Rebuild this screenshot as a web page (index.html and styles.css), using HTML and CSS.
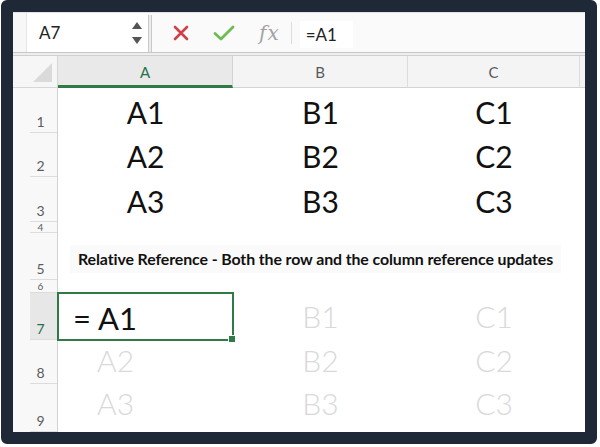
FILE: index.html
```html
<!DOCTYPE html>
<html>
<head>
<meta charset="utf-8">
<link rel="stylesheet" href="styles.css">
</head>
<body>
<div class="frame">
  <div class="sheet">
    <div class="fbar">
      <div class="pad"></div>
      <div class="namebox">
        <span class="ref">A7</span>
        <svg class="stepper" width="12" height="24" viewBox="0 0 12 24">
          <path d="M6 1 L11 8 L1 8 Z" fill="#555"/>
          <path d="M1 16 L11 16 L6 23 Z" fill="#555"/>
        </svg>
      </div>
      <div class="vsep"></div>
      <svg class="ico-x" width="16" height="16" viewBox="0 0 16 16">
        <path d="M2 2 L14 14 M14 2 L2 14" stroke="#cf4148" stroke-width="2.6" stroke-linecap="round"/>
      </svg>
      <svg class="ico-ok" width="22" height="16" viewBox="0 0 22 16">
        <path d="M2 8.5 L8 14 L20 2" stroke="#6cbd4e" stroke-width="2.8" fill="none" stroke-linecap="round" stroke-linejoin="round"/>
      </svg>
      <span class="fx">fx</span>
      <div class="fdiv"></div>
      <div class="formula">=A1</div>
    </div>
    <div class="fbar-bottom"></div>
    <div class="grid">
      <div class="corner"><span class="tri"></span></div>
      <div class="ch active">A</div>
      <div class="ch">B</div>
      <div class="ch">C</div>
      <div class="ch end"></div>

      <div class="rh"><span>1</span></div>
      <div class="c">A1</div><div class="c">B1</div><div class="c">C1</div><div class="c"></div>

      <div class="rh"><span>2</span></div>
      <div class="c">A2</div><div class="c">B2</div><div class="c">C2</div><div class="c"></div>

      <div class="rh"><span>3</span></div>
      <div class="c">A3</div><div class="c">B3</div><div class="c">C3</div><div class="c"></div>

      <div class="rh small"><span>4</span></div>
      <div class="c wide"></div><div class="c"></div>

      <div class="rh"><span>5</span></div>
      <div class="c wide note"><span class="note-box">Relative Reference - Both the row and the column reference updates</span></div><div class="c"></div>

      <div class="rh small"><span>6</span></div>
      <div class="c wide"></div><div class="c"></div>

      <div class="rh sel"><span>7</span></div>
      <div class="c selected"><span class="eq">=</span>A1</div><div class="c ghost r7">B1</div><div class="c ghost r7">C1</div><div class="c"></div>

      <div class="rh"><span>8</span></div>
      <div class="c ghost left r8">A2</div><div class="c ghost r8">B2</div><div class="c ghost r8">C2</div><div class="c"></div>

      <div class="rh"><span>9</span></div>
      <div class="c ghost left r9">A3</div><div class="c ghost r9">B3</div><div class="c ghost r9">C3</div><div class="c"></div>
    </div>
  </div>
</div>
</body>
</html>
```

FILE: styles.css
```css
* { box-sizing: border-box; }
html, body { margin: 0; padding: 0; background: #ffffff; }
body { width: 600px; height: 447px; overflow: hidden; font-family: Lato, "Open Sans", sans-serif; }

.frame {
  margin: 0 0 0 1px;
  width: 596px;
  height: 444px;
  border: 12px solid #1f2836;
  border-radius: 6px;
  background: #fff;
}
.sheet {
  width: 572px;
  height: 420px;
  display: flex;
  flex-direction: column;
  overflow: hidden;
}

/* formula bar */
.fbar {
  height: 40px;
  display: flex;
  align-items: center;
  background: #fafafa;
  border-top: 1px solid #e2e2e2;
}
.pad { width: 14px; align-self: stretch; background: #f7f7f7; border-right: 1px solid #e4e4e4; }
.namebox {
  width: 121px;
  align-self: stretch;
  background: #ffffff;
  display: flex;
  align-items: center;
  padding-left: 12px;
}
.ref { font-size: 17px; color: #222; flex: 1; }
.stepper { margin-right: 5px; }
.vsep { width: 4px; align-self: stretch; border-left: 1px solid #c9c9c9; border-right: 1px solid #c9c9c9; background: #ececec; margin-top: 2px; }
.ico-x { margin-left: 21px; }
.ico-ok { margin-left: 24px; }
.fx {
  margin-left: 24px;
  font-family: "DejaVu Serif", "Liberation Serif", serif;
  font-style: italic;
  font-size: 20px;
  color: #a3a3a3;
  letter-spacing: 1px;
}
.fdiv { width: 1px; height: 22px; background: #dcdcdc; margin-left: 11px; }
.formula {
  margin-left: 8px;
  align-self: stretch;
  margin-top: 8px;
  margin-bottom: 4px;
  width: 53px;
  background: #fff;
  font-size: 17px;
  color: #222;
  display: flex;
  align-items: center;
  padding-left: 6px;
}
.fbar-bottom {
  height: 4px;
  border-top: 1px solid #c6c6c6;
  border-bottom: 1px solid #cfcfcf;
  background: #eeeeee;
}

/* grid */
.grid {
  flex: 1;
  display: grid;
  grid-template-columns: 45px 175px 175px 172px 1fr;
  grid-template-rows: 32px 45px 44px 45px 11px 47px 13px 47px 44px 48px;
  overflow: hidden;
}
.corner {
  background: #f6f6f6;
  border-bottom: 1px solid #d6d6d6;
  border-right: 1px solid #d6d6d6;
  position: relative;
}
.tri {
  position: absolute;
  right: 5px;
  bottom: 5px;
  width: 0; height: 0;
  border-left: 19px solid transparent;
  border-bottom: 19px solid #dadada;
}
.ch {
  background: #f4f4f4;
  border-bottom: 1px solid #d3d3d3;
  border-right: 1px solid #dcdcdc;
  display: flex;
  align-items: center;
  justify-content: center;
  font-size: 15px;
  color: #5a5a5a;
  padding-top: 1px;
}
.ch.active {
  background: #e9e9e9;
  color: #217346;
  border-bottom: 3px solid #2f7a46;
  border-right: 1px solid #d3d3d3;
  padding-top: 2px;
}
.ch.end { border-right: none; }

.rh {
  background: #f8f8f8;
  padding-left: 17px;
  border-right: 1px solid #d3d3d3;
  overflow: hidden;
}
.rh span {
  display: flex;
  height: 100%;
  align-items: flex-end;
  justify-content: center;
  padding-right: 6px;
  padding-bottom: 3px;
  border-bottom: 1px solid #dcdcdc;
  font-size: 14px;
  line-height: 14px;
  color: #5c5c5c;
}
.rh.small span { padding-bottom: 0; font-size: 10px; line-height: 10px; align-items: center; }
.rh.sel { background: #f8f8f8; }
.rh.sel span { background: #e7e7e7; color: #217346; }

.c {
  display: flex;
  align-items: flex-end;
  justify-content: center;
  font-size: 30px;
  line-height: 30px;
  color: #111;
  padding-bottom: 6px;
}
.c.wide { grid-column: 2 / 5; }
.note { justify-content: flex-start; padding-bottom: 7px; }
.note-box {
  margin-left: 12px;
  background: #fafafa;
  font-size: 15.9px;
  line-height: 28px;
  font-weight: 700;
  padding: 0 8px;
  color: #111;
  letter-spacing: -0.1px;
}
.selected {
  outline: 2px solid #2f7a46;
  outline-offset: -1px;
  justify-content: flex-start;
  padding-left: 15px;
  position: relative;
  padding-bottom: 7px;
  font-size: 31px;
}
.selected::after {
  content: "";
  position: absolute;
  right: -3px;
  bottom: -3px;
  width: 6px;
  height: 6px;
  background: #2f7a46;
  border: 1px solid #fff;
}
.eq { margin-right: 7px; }
.ghost { color: #d9d9d9; font-weight: 300; }
.ghost.left { justify-content: flex-start; padding-left: 39px; }
.ghost.r7 { padding-bottom: 9px; }
.ghost.r8 { padding-bottom: 9px; }
.ghost.r9 { padding-bottom: 14px; }
```
